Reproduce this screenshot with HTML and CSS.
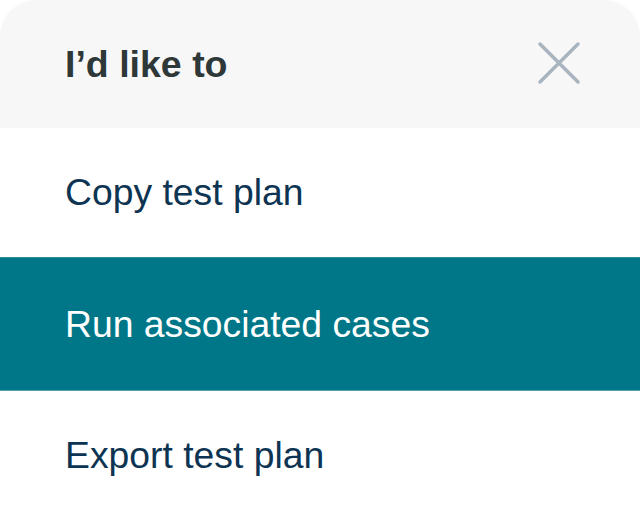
FILE: index.html
```html
<!DOCTYPE html>
<html>
<head>
<meta charset="utf-8">
<link rel="stylesheet" href="styles.css">
</head>
<body>
<div class="menu">
  <div class="header">
    <span class="title">I’d like to</span>
    <button class="close" aria-label="Close">
      <svg width="44" height="44" viewBox="0 0 44 44"><path d="M3 3 L41 41 M41 3 L3 41" stroke="#a8b5c0" stroke-width="3.5" stroke-linecap="round" fill="none"/></svg>
    </button>
  </div>
  <div class="item">Copy test plan</div>
  <div class="item active">Run associated cases</div>
  <div class="item">Export test plan</div>
</div>
</body>
</html>
```
FILE: styles.css
```css
html, body { margin: 0; padding: 0; background: #ffffff; }
body { font-family: "Liberation Sans", Arial, sans-serif; width: 640px; height: 520px; overflow: hidden; }
.menu { display: flex; flex-direction: column; }
.header {
  height: 128px;
  background: #f7f7f7;
  border-radius: 36px 36px 0 0;
  display: flex;
  align-items: center;
  justify-content: space-between;
  padding: 0 59px 0 65px;
  box-sizing: border-box;
}
.title { font-size: 37.5px; font-weight: bold; color: #2e3838; }
.close { background: none; border: 0; padding: 0; display: flex; margin-top: -2px; }
.item {
  height: 129px;
  display: flex;
  align-items: center;
  padding-left: 65px;
  font-size: 37.3px;
  color: #0d3452;
  box-sizing: border-box;
}
.item.active {
  height: 134px;
  background: #007788;
  color: #ffffff;
  border-top: 1px solid #2c8c9c;
  border-bottom: 1px solid #4fa2ae;
}
```
